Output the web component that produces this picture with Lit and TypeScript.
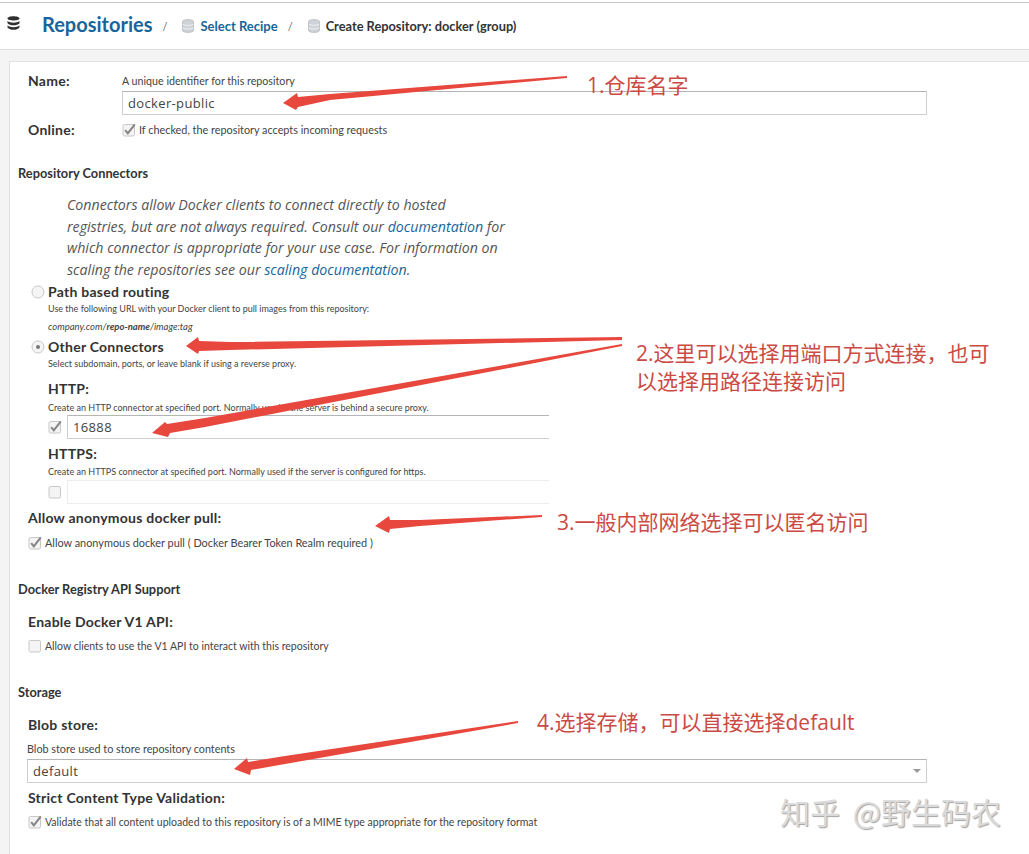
import { LitElement, html, css, svg } from "lit";
import { customElement } from "lit/decorators.js";

const check = (on: boolean) => html`<svg class="cb" viewBox="0 0 14 14" width="14" height="14">
  <rect x="1" y="1.5" width="11.5" height="11.5" rx="1.5" fill="#f4f4f4" stroke="#c8c8c8"/>
  ${on ? svg`<path d="M3.2 7.2 L5.8 10.4 L12.8 1.4" fill="none" stroke="#858585" stroke-width="2"/>` : ""}
</svg>`;

const radio = (on: boolean) => html`<svg class="radio" viewBox="0 0 14 14" width="14" height="14">
  <circle cx="7" cy="7" r="6" fill="#f5f5f5" stroke="#c8c8c8"/>
  ${on ? svg`<circle cx="7" cy="7" r="2" fill="#777"/>` : ""}
</svg>`;

const db = html`<svg class="db" viewBox="0 0 12 14" width="12" height="14">
  <path d="M0.5 2.5 C0.5 0 11.5 0 11.5 2.5 V11.5 C11.5 14 0.5 14 0.5 11.5 Z" fill="#cfd3d7" stroke="#b4b9bd" stroke-width="0.8"/>
  <path d="M0.8 5.2 C2.5 6.8 9.5 6.8 11.2 5.2 M0.8 8.8 C2.5 10.4 9.5 10.4 11.2 8.8" fill="none" stroke="#eef0f1" stroke-width="1"/>
</svg>`;

@customElement("app-root")
export class AppRoot extends LitElement {
  static styles = css`
    :host {
      display: block;
      position: relative;
      width: 1029px;
      height: 854px;
      overflow: hidden;
      background: #f4f4f4;
      font-family: Lato, "Liberation Sans", sans-serif;
      color: #3a3a3a;
    }
    .top { height: 2px; background: #fff; }
    .header {
      height: 46px;
      border-top: 1px solid #c2c4c6;
      border-bottom: 1px solid #dedede;
      background: #fff;
      display: flex;
      align-items: center;
      padding-left: 7px;
    }
    .stack { margin-right: 22px; margin-top: -6px; display: block; }
    .crumb-root { font-size: 20px; font-weight: 700; color: #17659a; margin-top: -4px; }
    .sep { font-size: 11px; color: #666; margin: 0 15px 0 10px; }
    .db { display: block; margin-right: 6px; }
    .crumb-link { font-size: 13px; font-weight: 700; color: #17659a; }
    .crumb-cur { font-size: 12.8px; font-weight: 700; color: #333; }
    .page {
      margin: 11px 0 0 9px;
      height: 800px;
      background: #fff;
      border-left: 1px solid #e2e2e2;
      border-top: 1px solid #e2e2e2;
      padding-left: 8px;
    }
    .label { font-size: 14px; line-height: 16px; font-weight: 700; color: #333; letter-spacing: 0.25px; }
    .title { font-size: 12.8px; line-height: 14px; font-weight: 700; color: #333; }
    .help { font-size: 9px; line-height: 12px; color: #444; }
    .help-lg { font-size: 10.8px; line-height: 12px; color: #444; margin-left: -1px; }
    .field { padding-left: 10px; }
    .name-row { display: grid; grid-template-columns: 94px 805px; padding-top: 11px; }
    .name-help { font-size: 10.7px; line-height: 14px; color: #444; padding-top: 1px; }
    .input {
      box-sizing: border-box;
      height: 24px;
      border: 1px solid #cfcfcf;
      border-top-color: #b5b5b5;
      background: #fff;
      padding-left: 5px;
      font-family: "Open Sans", sans-serif;
      font-size: 13px;
      line-height: 22px;
      color: #444;
      letter-spacing: 0.35px;
    }
    .online { display: grid; grid-template-columns: 94px auto; align-items: center; height: 14px; }
    .chk { display: flex; align-items: center; gap: 3px; font-size: 10.85px; line-height: 14px; color: #444; }
    .chk.wide { font-size: 10.9px; }
    .chk.narrow { font-size: 10.5px; }
    .cb { display: block; flex: none; }
    .para {
      width: 450px;
      padding-left: 49px;
      font-family: "Open Sans", sans-serif;
      font-size: 14.2px;
      line-height: 21.6px;
      font-style: italic;
      color: #555;
      white-space: nowrap;
    }
    .para a { color: #17659a; text-decoration: none; }
    .conn-head { display: flex; align-items: center; gap: 3px; margin-left: 13px; }
    .radio { display: block; flex: none; }
    .indent { padding-left: 30px; }
    .mono-it { font-size: 9.5px; line-height: 12px; font-style: italic; color: #444; }
    .mono-it b { font-weight: 700; }
    .port { display: flex; gap: 5px; align-items: center; width: 501px; }
    .port .input { flex: 1; border-right: 0; }
    .port .off { border-color: #ececec; }
    .select { position: relative; width: 900px; margin-left: -1px; }
    .caret {
      position: absolute;
      right: 6px;
      top: 10px;
      width: 0;
      height: 0;
      border-left: 4px solid transparent;
      border-right: 4px solid transparent;
      border-top: 4px solid #999;
    }
    .m1 { margin-top: 1px; } .m2 { margin-top: 2px; } .m3 { margin-top: 3px; } .m4 { margin-top: 4px; }
    .m5 { margin-top: 5px; } .m6 { margin-top: 6px; } .m7 { margin-top: 7px; } .m9 { margin-top: 9px; }
    .m10 { margin-top: 10px; } .m11 { margin-top: 11px; } .m14 { margin-top: 14px; } .m18 { margin-top: 18px; }
    .m30 { margin-top: 30px; } .m32 { margin-top: 32px; }

    .arrows { position: absolute; left: 0; top: 0; pointer-events: none; }
    .note {
      position: absolute;
      font-family: "Open Sans", "Noto Sans CJK SC", sans-serif;
      font-size: 21px;
      line-height: 28px;
      color: #cb4a44;
      white-space: nowrap;
    }
    .n1 { left: 587px; top: 71px; }
    .n2 { left: 636px; top: 339px; }
    .n3 { left: 557px; top: 508px; }
    .n4 { left: 537px; top: 708px; }
    .mark {
      position: absolute;
      left: 780px;
      top: 791px;
      font-family: "Noto Sans CJK SC", sans-serif;
      font-size: 30px;
      line-height: 40px;
      word-spacing: 6px;
      color: #dadada;
      text-shadow: 1px 1px 1px #a4a4a4;
      white-space: nowrap;
    }
  `;

  render() {
    return html`
      <div class="top"></div>
      <div class="header">
        <svg class="stack" viewBox="0 0 13 14" width="13" height="14">
          <path d="M0.5 2.6 C0.5 -0.4 12.5 -0.4 12.5 2.6 C12.5 5.2 0.5 5.2 0.5 2.6 Z M0.5 5 C3 7.3 10 7.3 12.5 5 V7.2 C10 10 3 10 0.5 7.2 Z M0.5 9.4 C3 11.7 10 11.7 12.5 9.4 V11.4 C10 14.6 3 14.6 0.5 11.4 Z" fill="#2f2f2f"/>
        </svg>
        <span class="crumb-root">Repositories</span>
        <span class="sep">/</span>
        ${db}
        <span class="crumb-link">Select Recipe</span>
        <span class="sep">/</span>
        ${db}
        <span class="crumb-cur">Create Repository: docker (group)</span>
      </div>
      <div class="page">
        <div class="field name-row">
          <div class="label">Name:</div>
          <div>
            <div class="name-help">A unique identifier for this repository</div>
            <div class="input m3">docker-public</div>
          </div>
        </div>
        <div class="field online m7">
          <div class="label">Online:</div>
          <div class="chk">${check(true)}If checked, the repository accepts incoming requests</div>
        </div>

        <div class="title m30">Repository Connectors</div>
        <div class="para m14">
          Connectors allow Docker clients to connect directly to hosted<br />
          registries, but are not always required. Consult our <a>documentation</a> for<br />
          which connector is appropriate for your use case. For information on<br />
          scaling the repositories see our <a>scaling documentation</a>.
        </div>

        <div class="conn-head m4">${radio(false)}<span class="label">Path based routing</span></div>
        <div class="indent">
          <div class="help m3">Use the following URL with your Docker client to pull images from this repository:</div>
          <div class="mono-it m6">company.com/<b>repo-name</b>/image:tag</div>
        </div>
        <div class="conn-head m6">${radio(true)}<span class="label">Other Connectors</span></div>
        <div class="indent">
          <div class="help m3">Select subdomain, ports, or leave blank if using a reverse proxy.</div>
          <div class="label m11">HTTP:</div>
          <div class="help m5">Create an HTTP connector at specified port. Normally used if the server is behind a secure proxy.</div>
          <div class="port m1">${check(true)}<div class="input">16888</div></div>
          <div class="label m7">HTTPS:</div>
          <div class="help m4">Create an HTTPS connector at specified port. Normally used if the server is configured for https.</div>
          <div class="port m2">${check(false)}<div class="input off"></div></div>
        </div>
        <div class="field">
          <div class="label m6">Allow anonymous docker pull:</div>
          <div class="chk wide m10">${check(true)}Allow anonymous docker pull ( Docker Bearer Token Realm required )</div>
        </div>

        <div class="title m32">Docker Registry API Support</div>
        <div class="field">
          <div class="label m18">Enable Docker V1 API:</div>
          <div class="chk narrow m9">${check(false)}Allow clients to use the V1 API to interact with this repository</div>
        </div>

        <div class="title m32">Storage</div>
        <div class="field">
          <div class="label m18">Blob store:</div>
          <div class="help-lg m10">Blob store used to store repository contents</div>
          <div class="select m4"><div class="input">default</div><span class="caret"></span></div>
          <div class="label m7">Strict Content Type Validation:</div>
          <div class="chk narrow m9">${check(true)}Validate that all content uploaded to this repository is of a MIME type appropriate for the repository format</div>
        </div>
      </div>

      <svg class="arrows" width="1029" height="854" viewBox="0 0 1029 854">
        <g fill="#e8473d">
          <polygon points="567,76 330,94 298,97 297,93 283,103 296,110 298,107 330,100 567,78" />
          <polygon points="622,337 230,342 199,341 198,337 186,346 198,354 199,351 230,350 622,340" />
          <polygon points="622,344 205,418 167,424 165,422 152,433 168,437 170,433 205,427 622,346" />
          <polygon points="542,515 420,520 390,520 389,516 375,526 389,533 390,529 420,526 542,517" />
          <polygon points="518,721 285,756 248,762 247,758 234,769 250,775 251,770 285,764 518,723" />
        </g>
      </svg>
      <div class="note n1">1.仓库名字</div>
      <div class="note n2">2.这里可以选择用端口方式连接&#xFF0C;也可<br />以选择用路径连接访问</div>
      <div class="note n3">3.一般内部网络选择可以匿名访问</div>
      <div class="note n4">4.选择存储&#xFF0C;可以直接选择default</div>
      <div class="mark">知乎 @野生码农</div>
    `;
  }
}
